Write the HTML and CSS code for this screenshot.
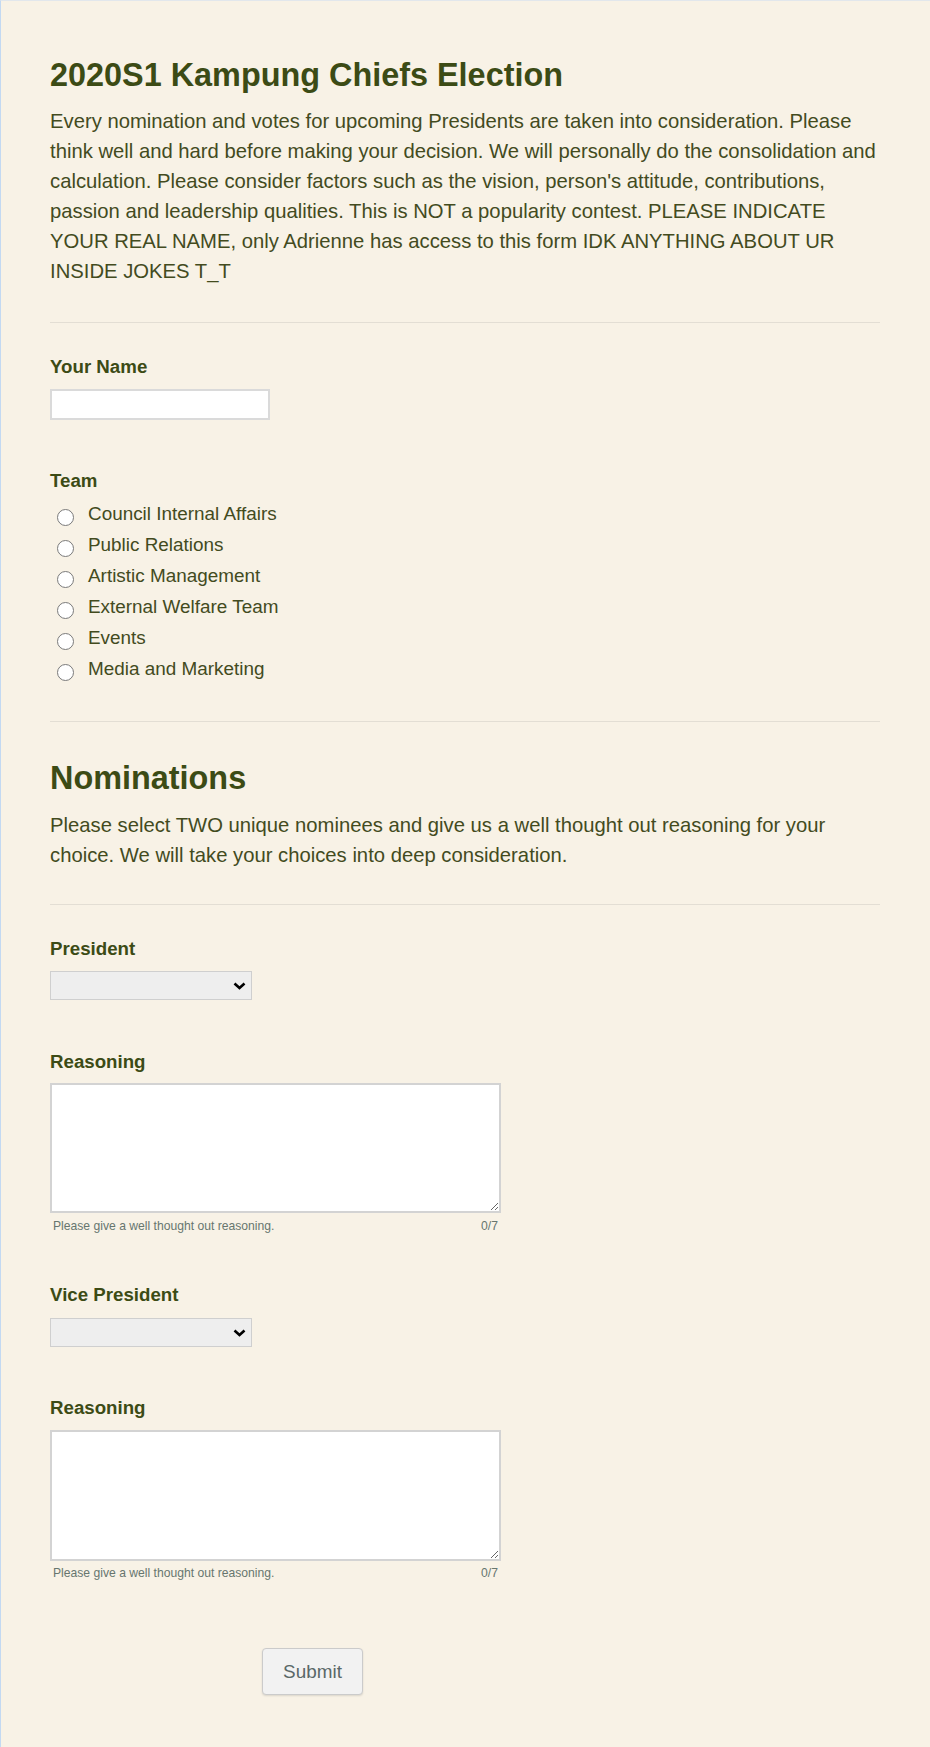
FILE: index.html
```html
<!DOCTYPE html>
<html lang="en">
<head>
<meta charset="utf-8">
<title>2020S1 Kampung Chiefs Election</title>
<link rel="stylesheet" href="styles.css">
</head>
<body>
<div class="page">
  <form class="form">
    <header class="section-head first">
      <h1 class="title">2020S1 Kampung Chiefs Election</h1>
      <p class="desc">Every nomination and votes for upcoming Presidents are taken into consideration. Please think well and hard before making your decision. We will personally do the consolidation and calculation. Please consider factors such as the vision, person's attitude, contributions, passion and leadership qualities. This is NOT a popularity contest. PLEASE INDICATE YOUR REAL NAME, only Adrienne has access to this form IDK ANYTHING ABOUT UR INSIDE JOKES T_T</p>
    </header>

    <div class="group group-1">
      <div class="field f-name">
        <label class="label" for="name">Your Name</label>
        <input class="text-input" id="name" type="text">
      </div>

      <div class="field f-team">
        <div class="label">Team</div>
        <ul class="radios">
          <li class="radio-row"><input class="radio" type="radio" name="team" id="t1"><label for="t1">Council Internal Affairs</label></li>
          <li class="radio-row"><input class="radio" type="radio" name="team" id="t2"><label for="t2">Public Relations</label></li>
          <li class="radio-row"><input class="radio" type="radio" name="team" id="t3"><label for="t3">Artistic Management</label></li>
          <li class="radio-row"><input class="radio" type="radio" name="team" id="t4"><label for="t4">External Welfare Team</label></li>
          <li class="radio-row"><input class="radio" type="radio" name="team" id="t5"><label for="t5">Events</label></li>
          <li class="radio-row"><input class="radio" type="radio" name="team" id="t6"><label for="t6">Media and Marketing</label></li>
        </ul>
      </div>
    </div>

    <header class="section-head second">
      <h2 class="title">Nominations</h2>
      <p class="desc desc-2">Please select TWO unique nominees and give us a well thought out reasoning for your choice. We will take your choices into deep consideration.</p>
    </header>

    <div class="group group-2">
      <div class="field f-pres">
        <label class="label" for="pres">President</label>
        <div class="select-wrap">
          <select class="select" id="pres"><option></option></select>
          <svg class="chev" width="13" height="8" viewBox="0 0 13 8"><path d="M1.5 1.5 L6.5 6 L11.5 1.5" fill="none" stroke="#000" stroke-width="2.6"/></svg>
        </div>
      </div>

      <div class="field f-reason1">
        <label class="label" for="r1">Reasoning</label>
        <textarea class="area" id="r1"></textarea>
        <div class="sub"><span>Please give a well thought out reasoning.</span><span>0/7</span></div>
      </div>

      <div class="field f-vp">
        <label class="label" for="vp">Vice President</label>
        <div class="select-wrap">
          <select class="select" id="vp"><option></option></select>
          <svg class="chev" width="13" height="8" viewBox="0 0 13 8"><path d="M1.5 1.5 L6.5 6 L11.5 1.5" fill="none" stroke="#000" stroke-width="2.6"/></svg>
        </div>
      </div>

      <div class="field f-reason2">
        <label class="label" for="r2">Reasoning</label>
        <textarea class="area area-2" id="r2"></textarea>
        <div class="sub sub-2"><span>Please give a well thought out reasoning.</span><span>0/7</span></div>
      </div>

      <div class="actions">
        <button class="submit" type="button">Submit</button>
      </div>
    </div>
  </form>
</div>
</body>
</html>
```

FILE: styles.css
```css
html, body {
  margin: 0;
  padding: 0;
  background: #f8f2e6;
}

.page {
  box-sizing: border-box;
  min-height: 1747px;
  border-left: 1px solid #c3d9f2;
  border-top: 1px solid #e2e7ec;
  background: #f8f2e6;
  font-family: "Liberation Sans", Arial, sans-serif;
  color: #434b1e;
}

.form {
  padding: 54.5px 50px 40px 49px;
}

.section-head {
  border-bottom: 1px solid #e3ded4;
  padding-bottom: 36px;
}

.section-head.second {
  border-top: 1px solid #e3ded4;
  padding-top: 37px;
  padding-bottom: 34px;
}

.title {
  margin: 0;
  font-size: 32.4px;
  line-height: 38px;
  font-weight: bold;
  color: #3c4b15;
}

.desc {
  margin: 12.5px 0 0;
  font-size: 20.25px;
  line-height: 30px;
}

.desc-2 {
  margin-top: 13px;
}

.label {
  display: block;
  font-size: 18.7px;
  line-height: 24px;
  font-weight: bold;
  color: #3c4b15;
}

.f-name { padding-top: 31.5px; }
.f-team { margin-top: 48.5px; }
.f-pres { padding-top: 31.5px; }
.f-reason1 { margin-top: 49.5px; }
.f-vp { margin-top: 48.5px; }
.f-reason2 { margin-top: 49px; }

.group-1 {
  padding-bottom: 37px;
}

.text-input {
  display: block;
  box-sizing: border-box;
  margin-top: 10.5px;
  width: 220px;
  height: 31px;
  border: 2px solid #dadada;
  background: #fff;
  padding: 0 6px;
  font: inherit;
  outline: none;
}

.radios {
  list-style: none;
  margin: 5.5px 0 0;
  padding: 0;
}

.radio-row {
  display: flex;
  align-items: flex-start;
  height: 31px;
  font-size: 18.9px;
  line-height: 31px;
}

.radio {
  appearance: none;
  -webkit-appearance: none;
  box-sizing: border-box;
  width: 17px;
  height: 17px;
  margin: 11px 14px 0 7px;
  border: 1.5px solid #7a7a7a;
  border-radius: 50%;
  background: #fff;
  flex: none;
}

.select-wrap {
  position: relative;
  width: 202px;
  margin-top: 10.5px;
}

.f-vp .select-wrap {
  margin-top: 11px;
}

.select {
  display: block;
  appearance: none;
  -webkit-appearance: none;
  box-sizing: border-box;
  width: 202px;
  height: 29px;
  border: 1px solid #cfcfcf;
  border-radius: 0;
  background: #eeeeee;
  font: inherit;
  font-size: 16px;
  outline: none;
}

.chev {
  position: absolute;
  right: 6px;
  top: 11px;
  pointer-events: none;
}

.area {
  display: block;
  box-sizing: border-box;
  margin-top: 9.5px;
  width: 451px;
  height: 130px;
  border: 2px solid #d3d3d3;
  background: #fff;
  resize: both;
  outline: none;
  font: inherit;
}

.area-2 {
  margin-top: 10.5px;
  height: 131px;
}

.sub {
  display: flex;
  justify-content: space-between;
  width: 451px;
  box-sizing: border-box;
  padding: 0 3px;
  margin-top: 5px;
  font-size: 12.15px;
  line-height: 16px;
  color: #67766f;
}

.sub-2 {
  margin-top: 4px;
}

.actions {
  margin-top: 67px;
  padding-left: 212px;
}

.submit {
  box-sizing: border-box;
  width: 101px;
  height: 47px;
  border: 1px solid #cbcbcb;
  border-radius: 4px;
  background: #f2f2f2;
  box-shadow: 0 1px 2px rgba(0, 0, 0, 0.12);
  font-family: "Liberation Sans", Arial, sans-serif;
  font-size: 18.9px;
  color: #5a6868;
  padding: 0;
}
```
